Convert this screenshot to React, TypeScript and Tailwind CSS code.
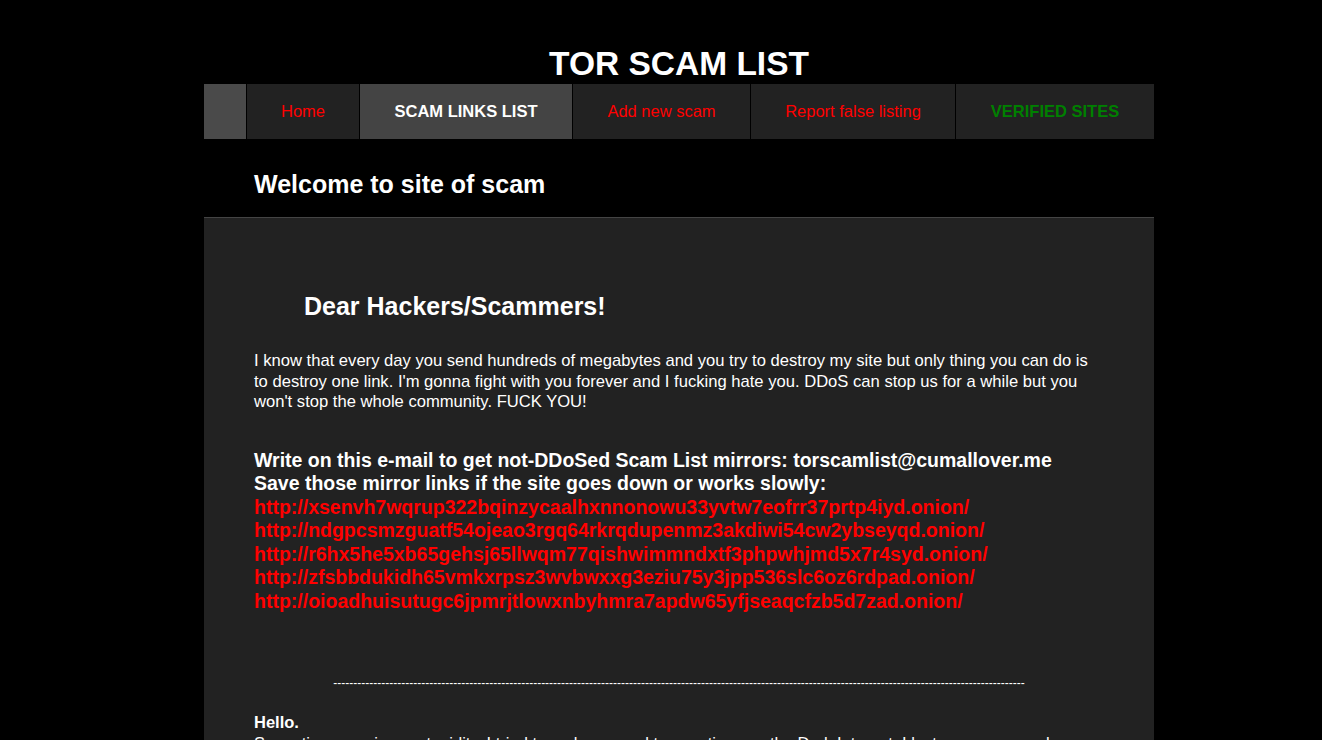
import React from 'react';

const mirrors = [
  'http://xsenvh7wqrup322bqinzycaalhxnnonowu33yvtw7eofrr37prtp4iyd.onion/',
  'http://ndgpcsmzguatf54ojeao3rgq64rkrqdupenmz3akdiwi54cw2ybseyqd.onion/',
  'http://r6hx5he5xb65gehsj65llwqm77qishwimmndxtf3phpwhjmd5x7r4syd.onion/',
  'http://zfsbbdukidh65vmkxrpsz3wvbwxxg3eziu75y3jpp536slc6oz6rdpad.onion/',
  'http://oioadhuisutugc6jpmrjtlowxnbyhmra7apdw65yfjseaqcfzb5d7zad.onion/',
];

const nav = [
  { label: 'Home', w: 'w-[112px]', cls: 'bg-[#222] text-[#ff0000]' },
  { label: 'SCAM LINKS LIST', w: 'w-[212px]', cls: 'bg-[#444] text-white font-bold' },
  { label: 'Add new scam', w: 'w-[177px]', cls: 'bg-[#222] text-[#ff0000]' },
  { label: 'Report false listing', w: 'w-[204px]', cls: 'bg-[#222] text-[#ff0000]' },
  { label: 'VERIFIED SITES', w: 'w-[198px]', cls: 'bg-[#222] text-[#008000] font-bold' },
];

export default function App() {
  return (
    <div className="min-h-[740px] bg-black text-white pl-[36px] font-['Liberation_Sans',Arial,sans-serif]">
      <div className="w-[950px] mx-auto pt-[45px]">
        <h1 className="text-[33.5px] leading-[38px] font-bold text-center mb-[1px]">TOR SCAM LIST</h1>

        {/* Menu */}
        <div className="flex h-[55px] gap-[1px] text-[16.5px]">
          <div className="w-[42px] bg-[#4a4a4a]" />
          {nav.map(item => (
            <a key={item.label} className={`${item.w} ${item.cls} flex items-center justify-center whitespace-nowrap`}>
              {item.label}
            </a>
          ))}
        </div>

        <h2 className="pl-[50px] pt-[30px] pb-[18px] text-[25px] leading-[30px] font-bold">Welcome to site of scam</h2>

        {/* Content */}
        <div className="border-t border-[#444] bg-[#222] pl-[50px] pr-[62px] pt-[73px]">
          <h3 className="pl-[50px] text-[25px] leading-[30px] font-bold">Dear Hackers/Scammers!</h3>

          <p className="mt-[30px] text-[16.6px] leading-[20.5px]">
            I know that every day you send hundreds of megabytes and you try to destroy my site but only thing you can do is to destroy one link. I'm gonna fight with you forever and I fucking hate you. DDoS can stop us for a while but you won't stop the whole community. FUCK YOU!
          </p>

          <div className="mt-[36px] text-[19.5px] leading-[23.5px] font-bold">
            <div>Write on this e-mail to get not-DDoSed Scam List mirrors: torscamlist@cumallover.me</div>
            <div>Save those mirror links if the site goes down or works slowly:</div>
            {mirrors.map(m => (
              <a key={m} className="block text-[#ff0000]">{m}</a>
            ))}
          </div>

          <div className="mt-[63px] -mr-[12px] text-[12px] leading-[14px] text-center whitespace-nowrap overflow-hidden">
            {'-'.repeat(173)}
          </div>

          <div className="mt-[22px] text-[16.5px] leading-[20.5px] pb-10">
            <div className="font-bold">Hello.</div>
            <p>
              Some time ago, in my stupidity, I tried to make several transactions on the Dark Internet. I lost my money and decided to create this list so that nobody else has to go through the same thing.
            </p>
          </div>
        </div>
      </div>
    </div>
  );
}
